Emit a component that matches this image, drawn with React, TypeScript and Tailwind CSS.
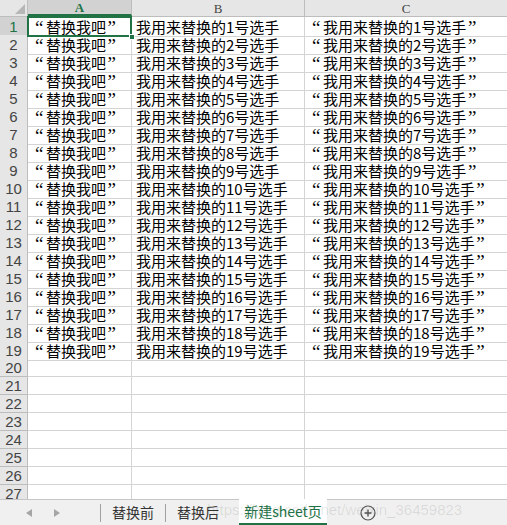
import React from "react";

const rows = Array.from({ length: 27 }, (_, i) => i + 1);

const quoteFont = { fontFamily: '"Liberation Serif", serif' };

function LQ() {
  return (
    <span className="relative top-[1px] inline-block w-[12px] pl-[1px] text-left text-[19px] leading-none" style={quoteFont}>
      “
    </span>
  );
}
function RQ() {
  return (
    <span className="relative top-[1px] inline-block w-[10px] text-right text-[19px] leading-none" style={quoteFont}>
      ”
    </span>
  );
}

export default function App() {
  return (
    <div
      className="relative w-[507px] h-[525px] overflow-hidden bg-white flex flex-col"
      style={{ fontFamily: '"Noto Sans CJK SC", "Liberation Sans", sans-serif' }}
    >
      <div className="flex-1 overflow-hidden">
        {/* header row */}
        <div className="grid grid-cols-[28px_104px_173px_1fr] h-[17px] bg-[#e6e6e6] border-b border-[#bdbdbd]">
          <div className="relative border-r border-[#bdbdbd]">
            <svg className="absolute right-[2px] bottom-[2px]" width="10" height="10" viewBox="0 0 10 10">
              <polygon points="10,0 10,10 0,10" fill="#b6b6b6" />
            </svg>
          </div>
          <div className="flex items-center justify-center bg-[#d2d2d2] border-r border-[#bdbdbd] border-b-2 border-b-[#217346] text-[#217346] font-bold text-[13px] leading-none" style={{ fontFamily: '"Liberation Serif", serif' }}>
            A
          </div>
          <div className="flex items-center justify-center border-r border-[#bdbdbd] text-[#444] text-[13px] leading-none" style={{ fontFamily: '"Liberation Serif", serif' }}>
            B
          </div>
          <div className="flex items-center justify-center text-[#444] text-[13px] leading-none" style={{ fontFamily: '"Liberation Serif", serif' }}>
            C
          </div>
        </div>
        {rows.map((n) => {
          const filled = n <= 19;
          return (
            <div key={n} className="grid grid-cols-[28px_104px_173px_1fr] h-[18px]">
              <div
                className={`flex items-center justify-center border-r border-b border-[#bdbdbd] text-[15px] leading-none ${
                  n === 1 ? "bg-[#d2d2d2] text-[#217346]" : "bg-[#e6e6e6] text-[#444]"
                }`}
                style={{ fontFamily: '"Liberation Sans", sans-serif' }}
              >
                {n}
              </div>
              <div className="relative flex items-center pl-[6px] border-r border-b border-[#d4d4d4] text-[15px] leading-none text-black whitespace-nowrap overflow-visible">
                {filled && (
                  <>
                    <LQ />
                    替换我吧
                    <RQ />
                  </>
                )}
                {n === 1 && (
                  <>
                    <div className="absolute -left-[1px] -top-[1px] -right-[1px] -bottom-[1px] border-2 border-[#217346] pointer-events-none" />
                    <div className="absolute -right-[4px] -bottom-[4px] w-[6px] h-[6px] bg-[#217346] border border-white z-10" />
                  </>
                )}
              </div>
              <div className="flex items-center pl-[4px] border-r border-b border-[#d4d4d4] text-[15px] leading-none text-black whitespace-nowrap">
                {filled ? `我用来替换的${n}号选手` : ""}
              </div>
              <div className="flex items-center pl-[6px] border-b border-[#d4d4d4] text-[15px] leading-none text-black whitespace-nowrap">
                {filled && (
                  <>
                    <LQ />
                    {`我用来替换的${n}号选手`}
                    <RQ />
                  </>
                )}
              </div>
            </div>
          );
        })}
      </div>

      {/* tab bar */}
      <div className="h-[26px] shrink-0 flex items-stretch bg-[#f0f0f0] text-[14px] text-[#333]">
        <div className="flex items-center w-[100px] border-t border-[#c6c6c6]">
          <svg className="ml-[26px]" width="6" height="8" viewBox="0 0 6 8">
            <polygon points="6,0 6,8 0,4" fill="#a6a6a6" />
          </svg>
          <svg className="ml-[22px]" width="6" height="8" viewBox="0 0 6 8">
            <polygon points="0,0 0,8 6,4" fill="#a6a6a6" />
          </svg>
        </div>
        <div className="flex items-center border-t border-[#c6c6c6]">
          <div className="w-px h-[18px] bg-[#a0a0a0]" />
          <div className="pl-[11px] pr-[11px]">替换前</div>
          <div className="w-px h-[18px] bg-[#a0a0a0]" />
          <div className="pl-[11px] pr-[20px]">替换后</div>
        </div>
        <div className="flex items-center justify-center w-[88px] bg-white text-[#217346] font-normal border-b-2 border-[#217346]">
          新建sheet页
        </div>
        <div className="flex-1 flex items-center border-t border-[#c6c6c6]">
          <svg className="ml-[33px]" width="16" height="16" viewBox="0 0 16 16">
            <circle cx="8" cy="8" r="7" fill="none" stroke="#555" strokeWidth="1.2" />
            <path d="M8 4.5v7M4.5 8h7" stroke="#555" strokeWidth="1.4" />
          </svg>
        </div>
      </div>

      <div
        className="absolute left-[207px] top-[502px] text-[15px] leading-none text-[#000000]/10 whitespace-nowrap pointer-events-none"
        style={{ fontFamily: '"Liberation Sans", sans-serif' }}
      >
        https://blog.csdn.net/weixin_36459823
      </div>
    </div>
  );
}
